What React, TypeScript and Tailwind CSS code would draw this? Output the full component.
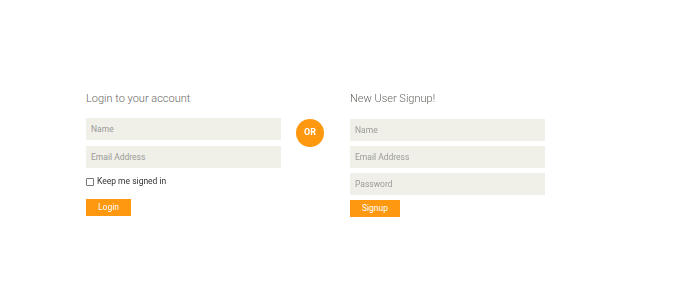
import React from "react";

export default function App() {
  const font = { fontFamily: "Roboto, 'Liberation Sans', sans-serif" };
  const inputCls =
    "block w-[195px] h-[22px] bg-[#F0F0E9] border-0 outline-none px-[5px] text-[8.5px] text-[#696763] placeholder:text-[#9a9a97] font-normal";
  return (
    <div className="w-[680px] h-[308px] bg-white flex pl-[86px] pt-[92px]" style={font}>
      <div className="w-[195px] flex flex-col">
        <h2 className="text-[11px] leading-[13px] font-light text-[#696763] m-0">Login to your account</h2>
        <div className="mt-[13px] flex flex-col gap-[6px]">
          <input className={inputCls} placeholder="Name" />
          <input className={inputCls} placeholder="Email Address" autoFocus />
        </div>
        <label className="mt-[9px] flex items-center gap-[3px] text-[8.5px] text-[#333] leading-[9px]">
          <span className="inline-block w-[8px] h-[8px] border border-[#767676] rounded-[1px] bg-white" />
          <span>Keep me signed in</span>
        </label>
        <button className="mt-[13px] w-[45px] h-[17px] bg-[#FE980F] text-white text-[8.5px] flex items-center justify-center">
          Login
        </button>
      </div>
      <div className="w-[69px] flex pl-[15px]">
        <div className="mt-[27px] w-[28px] h-[28px] rounded-full bg-[#FE980F] text-white text-[9px] font-bold flex items-center justify-center">
          OR
        </div>
      </div>
      <div className="w-[195px] flex flex-col">
        <h2 className="text-[11px] leading-[13px] font-light text-[#696763] m-0">New User Signup!</h2>
        <div className="mt-[14px] flex flex-col gap-[5px]">
          <input className={inputCls} placeholder="Name" />
          <input className={inputCls} placeholder="Email Address" />
          <input className={inputCls} placeholder="Password" type="password" />
        </div>
        <button className="mt-[5px] w-[50px] h-[17px] bg-[#FE980F] text-white text-[8.5px] flex items-center justify-center">
          Signup
        </button>
      </div>
    </div>
  );
}
